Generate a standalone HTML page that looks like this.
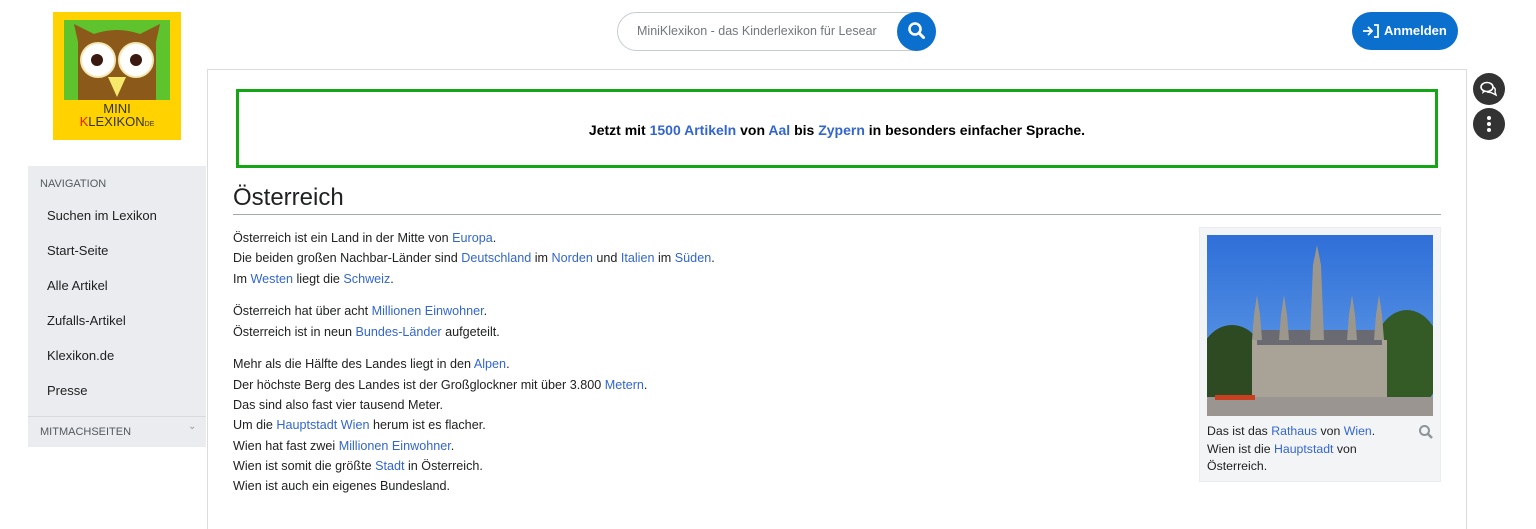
<!DOCTYPE html>
<html><head><meta charset="utf-8"><style>
*{margin:0;padding:0;box-sizing:border-box}
body{width:1536px;height:510px;overflow:hidden;background:#fff;font-family:"Liberation Sans",sans-serif;color:#202122;position:relative}
a{color:#3366cc;text-decoration:none}
.abs{position:absolute}
.side{left:28px;top:166px;width:178px;height:281px;background:#eaecf0}
.side .h{position:absolute;left:12px;font-size:11px;color:#54595d}
.side .i{position:absolute;left:19px;font-size:13px;color:#202122}
.content{left:207px;top:69px;width:1260px;height:460px;border:1px solid #dcdcdc;border-bottom:none}
.green{left:236px;top:89px;width:1202px;height:79px;border:3px solid #14a614;text-align:center;font-size:14px;font-weight:bold;line-height:76px;color:#000}
h1{position:absolute;left:233px;top:184px;width:1208px;font-weight:normal;font-size:24px;font-family:"Liberation Sans",sans-serif;border-bottom:1px solid #a2a9b1;padding-bottom:2px;color:#202122}
.txt{left:233px;top:228px;font-size:12.6px;line-height:20.3px}
.txt p{margin-bottom:12.5px}
.thumb{left:1199px;top:227px;width:242px;height:255px;background:#f3f4f6;border:1px solid #eaecf0}
.cap{left:1207px;top:423px;font-size:12.3px;line-height:17.5px;width:200px}
</style></head><body>
<div class="abs" style="left:53px;top:12px;width:128px;height:128px;background:#ffd200"></div>
<div class="abs" style="left:64px;top:20px;width:106px;height:80px;background:#5ec32c"></div>
<svg class="abs" style="left:64px;top:20px" width="106" height="80" viewBox="0 0 106 80">
<path d="M14 80 L14 22 L10 4 L30 14 Q53 6 76 14 L96 4 L92 22 L92 80 Z" fill="#8b5a1a"/>
<circle cx="34" cy="40" r="17" fill="#fff" stroke="#f3e6b0" stroke-width="2"/>
<circle cx="72" cy="40" r="17" fill="#fff" stroke="#f3e6b0" stroke-width="2"/>
<circle cx="33" cy="40" r="6" fill="#3a1a10"/><circle cx="72" cy="40" r="6" fill="#3a1a10"/>
<path d="M44 57 L62 57 L53 77 Z" fill="#f6e86a"/>
</svg>
<div class="abs" style="left:62px;top:102px;width:110px;text-align:center;font-size:13px;line-height:13px;color:#333">MINI<br><span style="color:#e02010">K</span>LEXIKON<span style="font-size:7px">DE</span></div>
<div class="abs" style="left:617px;top:12px;width:319px;height:39px;border:1px solid #c8ccd1;border-radius:20px"></div>
<div class="abs" style="left:637px;top:24px;font-size:12.5px;color:#72777d">MiniKlexikon - das Kinderlexikon für Lesear</div>
<div class="abs" style="left:897px;top:12px;width:39px;height:39px;border-radius:50%;background:#0b6fce"></div>
<svg class="abs" style="left:907px;top:21px" width="20" height="20" viewBox="0 0 20 20"><circle cx="8" cy="8" r="5.5" fill="none" stroke="#fff" stroke-width="2.6"/><path d="M12 12 L16.5 16.5" stroke="#fff" stroke-width="3" stroke-linecap="round"/></svg>
<div class="abs" style="left:1352px;top:12px;width:106px;height:38px;border-radius:19px;background:#0b6fce;color:#fff;font-size:13px;font-weight:bold;line-height:38px;padding-left:32px">Anmelden</div>
<svg class="abs" style="left:1362px;top:23px" width="18" height="16" viewBox="0 0 18 16"><path d="M1 8 H10 M6 4 L10 8 L6 12 M12 2 H16 V14 H12" fill="none" stroke="#fff" stroke-width="1.8"/></svg>
<div class="abs" style="left:1473px;top:73px;width:32px;height:32px;border-radius:50%;background:#333"></div>
<svg class="abs" style="left:1478px;top:78px" width="22" height="22" viewBox="0 0 22 22"><ellipse cx="9" cy="9" rx="6" ry="4.5" fill="none" stroke="#fff" stroke-width="1.6"/><path d="M5 12 L4 16 L8 13" fill="#fff"/><path d="M15 9 Q18 10 17 14 L18 17 L13 14.5 L9 14" fill="none" stroke="#fff" stroke-width="1.4"/></svg>
<div class="abs" style="left:1473px;top:108px;width:32px;height:32px;border-radius:50%;background:#333"></div>
<div class="abs" style="left:1487px;top:116px;width:4px;height:4px;border-radius:50%;background:#fff;box-shadow:0 6px 0 #fff,0 12px 0 #fff"></div>
<div class="abs side">
<div class="h" style="top:12px">NAVIGATION</div>
<div class="i" style="top:42px">Suchen im Lexikon</div>
<div class="i" style="top:77px">Start-Seite</div>
<div class="i" style="top:112px">Alle Artikel</div>
<div class="i" style="top:147px">Zufalls-Artikel</div>
<div class="i" style="top:182px">Klexikon.de</div>
<div class="i" style="top:217px">Presse</div>
<div style="position:absolute;left:0;top:250px;width:178px;border-top:1px solid #d8dadd"></div>
<div class="h" style="top:260px">MITMACHSEITEN</div>
<div class="h" style="top:255px;left:160px;font-size:10px;color:#999">&#8964;</div>
</div>
<div class="abs content"></div>
<div class="abs green">Jetzt mit <a href="#">1500 Artikeln</a> von <a href="#">Aal</a> bis <a href="#">Zypern</a> in besonders einfacher Sprache.</div>
<h1>Österreich</h1>
<div class="abs txt">
<p>Österreich ist ein Land in der Mitte von <a>Europa</a>.<br>Die beiden großen Nachbar-Länder sind <a>Deutschland</a> im <a>Norden</a> und <a>Italien</a> im <a>Süden</a>.<br>Im <a>Westen</a> liegt die <a>Schweiz</a>.</p>
<p>Österreich hat über acht <a>Millionen Einwohner</a>.<br>Österreich ist in neun <a>Bundes-Länder</a> aufgeteilt.</p>
<p>Mehr als die Hälfte des Landes liegt in den <a>Alpen</a>.<br>Der höchste Berg des Landes ist der Großglockner mit über 3.800 <a>Metern</a>.<br>Das sind also fast vier tausend Meter.<br>Um die <a>Hauptstadt Wien</a> herum ist es flacher.<br>Wien hat fast zwei <a>Millionen Einwohner</a>.<br>Wien ist somit die größte <a>Stadt</a> in Österreich.<br>Wien ist auch ein eigenes Bundesland.</p>
</div>
<div class="abs thumb"></div>
<svg class="abs" style="left:1207px;top:235px" width="226" height="181" viewBox="0 0 226 181">
<defs><linearGradient id="s" x1="0" y1="0" x2="0" y2="1"><stop offset="0" stop-color="#2f6fd8"/><stop offset="1" stop-color="#6aa3ea"/></linearGradient></defs>
<rect width="226" height="181" fill="url(#s)"/>
<ellipse cx="25" cy="135" rx="35" ry="45" fill="#2d4a22"/>
<ellipse cx="200" cy="125" rx="35" ry="50" fill="#345a26"/>
<rect x="45" y="105" width="135" height="60" fill="#a8a297"/>
<rect x="50" y="95" width="125" height="15" fill="#6a6a72"/>
<path d="M103 105 L106 30 L110 10 L114 30 L117 105 Z" fill="#9c978c"/>
<path d="M45 105 L47 80 L50 60 L53 80 L55 105Z M72 105 L74 80 L77 60 L80 80 L82 105Z M140 105 L142 80 L145 60 L148 80 L150 105Z M167 105 L169 80 L172 60 L175 80 L177 105Z" fill="#9c978c"/>
<rect x="0" y="162" width="226" height="19" fill="#9a9590"/>
<rect x="8" y="160" width="40" height="5" fill="#c84020"/>
</svg>
<div class="abs cap">Das ist das <a>Rathaus</a> von <a>Wien</a>.<br>Wien ist die <a>Hauptstadt</a> von<br>Österreich.</div>
<svg class="abs" style="left:1418px;top:424px" width="16" height="16" viewBox="0 0 16 16"><circle cx="6.5" cy="6.5" r="4.5" fill="none" stroke="#8f9499" stroke-width="2"/><path d="M10 10 L14 14" stroke="#8f9499" stroke-width="2.5"/></svg>
</body></html>
